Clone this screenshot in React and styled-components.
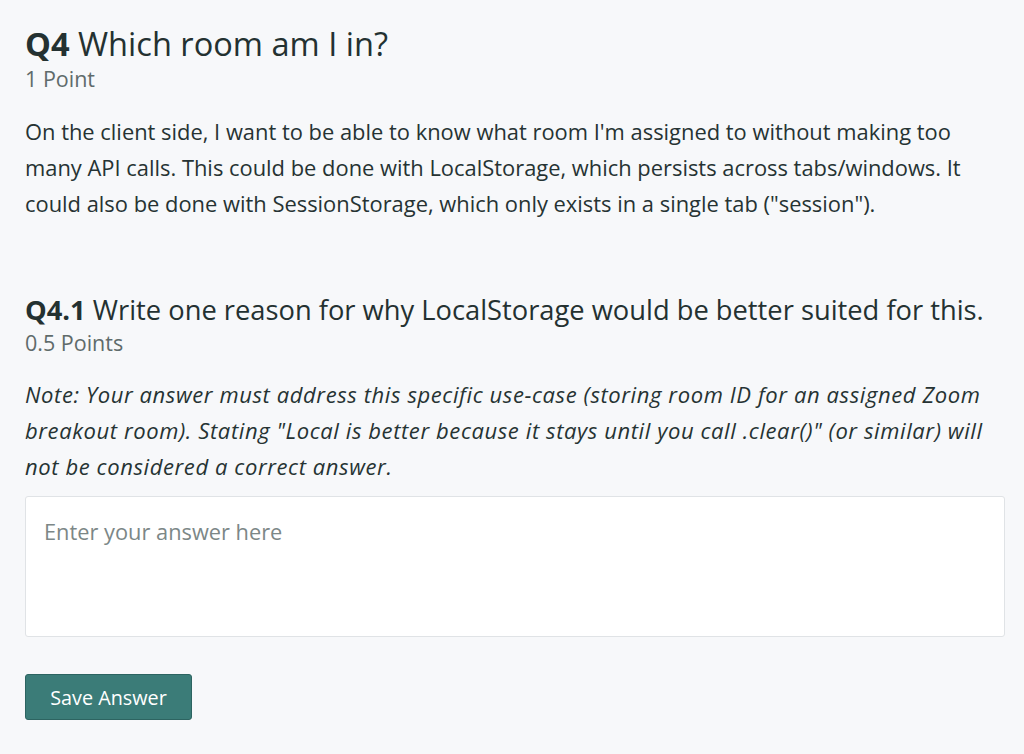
import React from 'react';
import styled, { createGlobalStyle } from 'styled-components';

const GlobalStyle = createGlobalStyle`
  html, body {
    margin: 0;
    padding: 0;
    background: #f7f8fa;
  }
  body {
    font-family: "Open Sans", "Noto Sans", sans-serif;
    color: #263333;
  }
`;

const Page = styled.div`
  padding: 24px 20px 34px 25px;
  display: flex;
  flex-direction: column;
`;

const Question = styled.section`
  display: flex;
  flex-direction: column;
`;

const Heading = styled.h2`
  margin: 0;
  font-weight: 400;
  font-size: ${(p) => (p.small ? '27.3px' : '32.6px')};
  line-height: ${(p) => (p.small ? '37px' : '40px')};
  color: #243131;
  white-space: nowrap;
`;

const Number = styled.b`
  font-weight: 700;
`;

const Points = styled.div`
  margin-top: 2px;
  font-size: 21.5px;
  line-height: 26px;
  color: #5f6b6b;
`;

const Prompt = styled.p`
  margin: ${(p) => (p.italic ? '20px' : '22px')} 0 0;
  font-size: ${(p) => (p.italic ? '22px' : '21.9px')};
  letter-spacing: ${(p) => (p.italic ? '0.6px' : 'normal')};
  line-height: 36px;
  font-style: ${(p) => (p.italic ? 'italic' : 'normal')};
  white-space: nowrap;
`;

const SubQuestion = styled(Question)`
  margin-top: 69px;
`;

const Answer = styled.textarea`
  margin-top: 12px;
  height: 141px;
  box-sizing: border-box;
  width: 980px;
  border: 1px solid #e0e3e6;
  border-radius: 3px;
  background: #fff;
  padding: 20px 18px;
  font-family: inherit;
  font-size: 21.8px;
  color: #263333;
  resize: none;
  outline: none;
  &::placeholder {
    color: #7c8787;
  }
`;

const SaveButton = styled.button`
  align-self: flex-start;
  margin-top: 37px;
  width: 167px;
  height: 46px;
  background: #3b7c78;
  border: 1px solid #2d6461;
  border-radius: 3px;
  color: #fff;
  font-family: inherit;
  font-size: 19.8px;
  cursor: pointer;
`;

export default function App() {
  return (
    <>
      <GlobalStyle />
      <Page>
        <Question>
          <Heading>
            <Number>Q4</Number> Which room am I in?
          </Heading>
          <Points>1 Point</Points>
          <Prompt>
            On the client side, I want to be able to know what room I'm assigned to without making too
            <br />
            many API calls. This could be done with LocalStorage, which persists across tabs/windows. It
            <br />
            could also be done with SessionStorage, which only exists in a single tab ("session").
          </Prompt>
        </Question>
        <SubQuestion>
          <Heading small>
            <Number>Q4.1</Number> Write one reason for why LocalStorage would be better suited for this.
          </Heading>
          <Points>0.5 Points</Points>
          <Prompt italic>
            Note: Your answer must address this specific use-case (storing room ID for an assigned Zoom
            <br />
            breakout room). Stating "Local is better because it stays until you call .clear()" (or similar) will
            <br />
            not be considered a correct answer.
          </Prompt>
          <Answer placeholder="Enter your answer here" />
          <SaveButton>Save Answer</SaveButton>
        </SubQuestion>
      </Page>
    </>
  );
}
